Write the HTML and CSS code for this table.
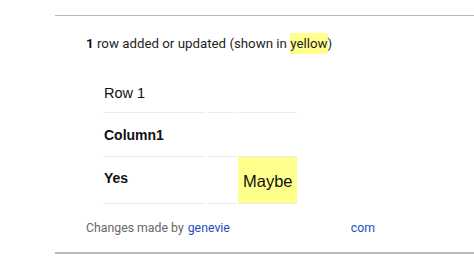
FILE: index.html
```html
<!DOCTYPE html>
<html>
<head>
<meta charset="utf-8">
<link rel="stylesheet" href="styles.css">
</head>
<body>
<div class="panel">
  <p class="summary"><b>1</b> row added or updated (shown in <span class="hl">yellow</span>)</p>
  <table class="changes">
    <tr class="r1"><td class="c1 plain">Row 1</td><td class="c2"></td><td class="c3"></td></tr>
    <tr class="r2"><td class="c1 bold">Column1</td><td class="c2"></td><td class="c3"></td></tr>
    <tr class="r3"><td class="c1 bold">Yes</td><td class="c2"></td><td class="c3 changed">Maybe</td></tr>
  </table>
  <p class="footer"><span class="by">Changes made by</span><a class="user"><span class="name">genevie</span><span class="redact"></span><span class="dom">com</span></a></p>
</div>
</body>
</html>
```

FILE: styles.css
```css
html, body { margin: 0; padding: 0; background: #fff; }
body { font-family: Roboto, "Liberation Sans", Arial, sans-serif; }
.panel {
  margin: 15px 0 0 55px;
  border-top: 1px solid #b8b8b8;
  border-bottom: 2px solid #b8b8b8;
  padding: 18px 0 0 31px;
  height: 239px;
  box-sizing: border-box;
}
.summary {
  margin: 0;
  font-size: 13.3px;
  line-height: 20px;
  color: #1e1e1e;
}
.summary b { font-weight: 700; color: #111; }
.hl { background: #ffff8c; padding: 3px 0; }
.changes {
  margin: 15px 0 0 15px;
  border-collapse: separate;
  border-spacing: 2px 0;
  table-layout: fixed;
  font-family: "Liberation Sans", Arial, sans-serif;
  color: #111;
}
.changes td {
  border-bottom: 1px solid #ececec;
  padding: 0 0 0 1px;
  vertical-align: middle;
}
.changes .r1 td { height: 39px; padding-top: 4px; }
.changes .r2 td { height: 43px; }
.changes .r3 td { height: 46px; }
.changes .r3 td.c1 { height: 41px; padding-bottom: 5px; }
.changes .r3 td.changed {
  background: #ffff8c;
  font-size: 16.5px;
  height: 44px;
  padding: 2px 0 0 1px;
  text-indent: 4px;
  white-space: nowrap;
}
.c1 { width: 102px; font-size: 14px; }
.c2 { width: 27px; }
.c3 { width: 58px; }
.changes td.plain { font-size: 14.5px; }
.bold { font-weight: 700; }
.footer {
  margin: 17px 0 0 0;
  font-size: 12.3px;
  color: #666;
  white-space: nowrap;
}
.by { margin-right: 4px; }
.user { color: #1f4fb8; }
.redact { display: inline-block; width: 121px; }
```
